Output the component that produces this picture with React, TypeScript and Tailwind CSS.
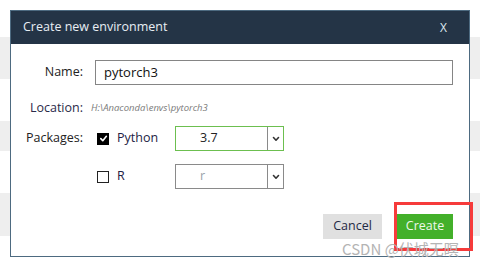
import React from 'react'

const font = { fontFamily: '"Open Sans", "Noto Sans CJK SC", sans-serif' }

const Chevron = () => (
  <svg className="h-[6px] w-[8px]" viewBox="0 0 8 6" fill="none" stroke="#333" strokeWidth="1.6" strokeLinecap="round" strokeLinejoin="round">
    <path d="M1.5 1.5 4 4.2 6.5 1.5" />
  </svg>
)

function Select({ value, active, muted }: { value: string; active?: boolean; muted?: boolean }) {
  return (
    <div className={`flex h-[25px] w-[109px] border bg-white ${active ? 'border-[#6cbf4f]' : 'border-[#8a8a8a]'}`}>
      <div className={`flex flex-1 items-center pl-[24px] text-[12.5px] ${muted ? 'text-[#9aa3ab]' : 'text-[#222]'}`}>{value}</div>
      <div className="flex w-[16px] items-center justify-center border-l border-[#8a8a8a]">
        <Chevron />
      </div>
    </div>
  )
}

function Checkbox({ checked }: { checked?: boolean }) {
  return checked ? (
    <div className="flex h-[12px] w-[12px] items-center justify-center bg-black">
      <svg className="h-[9px] w-[9px]" viewBox="0 0 10 10" fill="none" stroke="white" strokeWidth="1.8" strokeLinecap="round" strokeLinejoin="round">
        <path d="M2 5.2 4.2 7.4 8.2 2.6" />
      </svg>
    </div>
  ) : (
    <div className="h-[12px] w-[12px] border-[1.5px] border-[#222] bg-white" />
  )
}

export default function App() {
  const stripes = [
    { h: 'h-[37px]', bg: 'bg-white' },
    { h: 'h-[42px]', bg: 'bg-[#eeeeee]' },
    { h: 'h-[42px]', bg: 'bg-white' },
    { h: 'h-[30px]', bg: 'bg-[#eeeeee]' },
    { h: 'h-[42px]', bg: 'bg-white' },
    { h: 'h-[43px]', bg: 'bg-[#eeeeee]' },
    { h: 'h-[31px]', bg: 'bg-white' },
  ]

  return (
    <div className="relative h-[267px] w-[480px] overflow-hidden bg-white" style={font}>
      {/* page rows behind the modal */}
      <div className="flex flex-col">
        {stripes.map((s, i) => (
          <div key={i} className={`${s.h} ${s.bg}`} />
        ))}
      </div>

      {/* modal */}
      <div className="absolute left-[10px] top-[10px] flex h-[247px] w-[460px] flex-col border border-[#4d6a80] bg-white">
        <div className="flex h-[33px] items-center justify-between bg-[#243446] pl-[12px] pr-[22px]">
          <span className="text-[12.5px] text-[#e8eef4]">Create new environment</span>
          <span className="text-[12px] text-[#dfe8f0]">X</span>
        </div>

        <div className="flex flex-col pr-[16px] text-[12.5px] text-[#222]">
          <div className="mt-[16px] flex items-center">
            <span className="w-[72px] text-right">Name:</span>
            <div className="ml-[12px] flex h-[25px] flex-1 items-center border border-[#858585] pl-[8px] text-[13px] text-[#111]">pytorch3</div>
          </div>

          <div className="mt-[11px] flex h-[24px] items-center">
            <span className="w-[72px] text-right text-[#2a2a4a]">Location:</span>
            <span className="ml-[8px] text-[9.5px] italic text-[#7a7a7a]">H:\Anaconda\envs\pytorch3</span>
          </div>

          <div className="mt-[6px] flex h-[25px] items-center">
            <span className="w-[72px] text-right">Packages:</span>
            <div className="ml-[14px] flex w-[78px] items-center gap-[8px]">
              <Checkbox checked />
              <span className="text-[#222244]">Python</span>
            </div>
            <Select value="3.7" active />
          </div>

          <div className="mt-[13px] flex h-[25px] items-center">
            <span className="w-[72px]" />
            <div className="ml-[14px] flex w-[78px] items-center gap-[8px]">
              <Checkbox />
              <span className="text-[#222244]">R</span>
            </div>
            <Select value="r" muted />
          </div>

          <div className="mt-[25px] flex justify-end gap-[15px]">
            <button className="h-[25px] w-[59px] bg-[#e0e0e0] text-[12.5px] text-[#1f2a44]">Cancel</button>
            <button className="h-[25px] w-[56px] bg-[#43b02a] text-[12.5px] text-[#eef8ea]">Create</button>
          </div>
        </div>
      </div>

      {/* highlight annotation */}
      <div className="absolute left-[394px] top-[202px] h-[49px] w-[79px] border-[3px] border-[#f63b3b]" />

      {/* watermark */}
      <div
        className="absolute left-[342px] top-[240px] text-[15px] leading-[18px] text-[#b4b4b4]"
        style={{ fontFamily: '"Noto Sans CJK SC", "Liberation Sans", sans-serif' }}
      >
        CSDN @伏城无暝
      </div>
    </div>
  )
}
